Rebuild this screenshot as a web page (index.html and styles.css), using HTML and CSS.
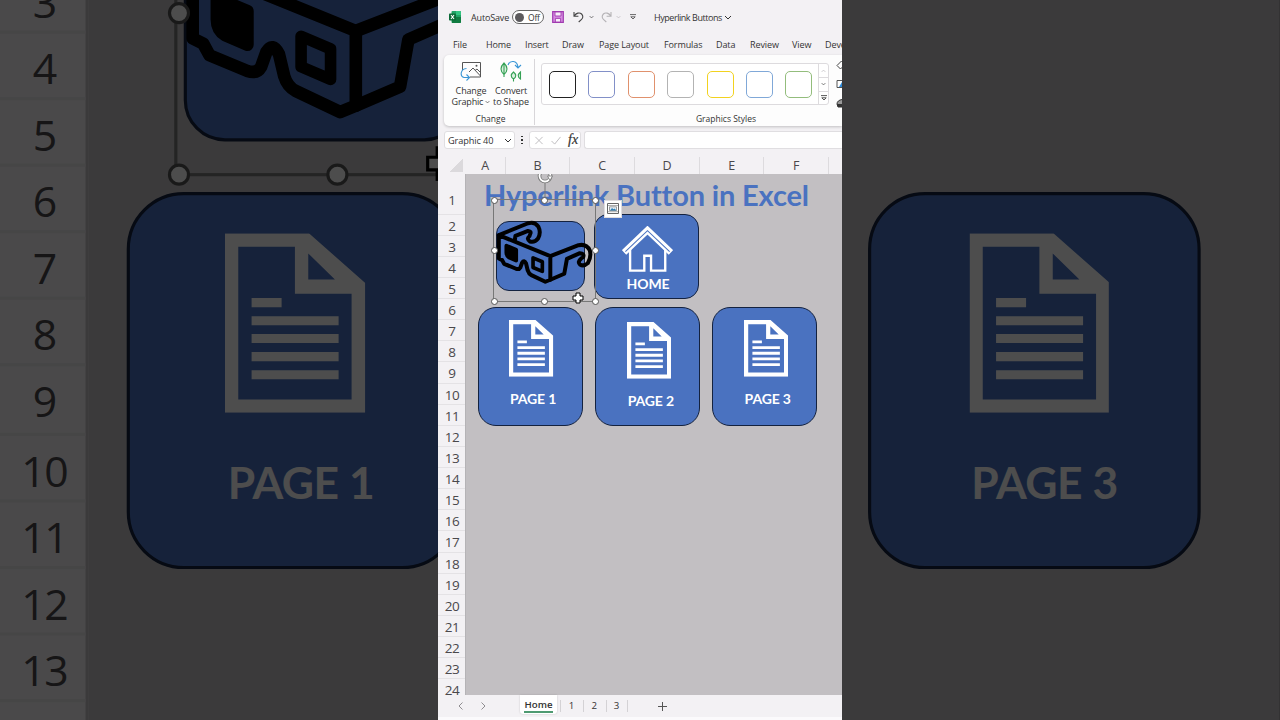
FILE: index.html
```html
<!DOCTYPE html>
<html lang="en">
<head>
    <meta charset="UTF-8">
    <meta name="viewport" content="width=device-width, initial-scale=1.0">
    <title>Hyperlink Buttons</title>
    <link rel="stylesheet" href="styles.css">
</head>
<body>
    <!-- shared icons -->
    <svg class="defs" width="0" height="0">
        <symbol id="doc" viewBox="0 0 421 535" preserveAspectRatio="none">
            <path fill="#fff" fill-rule="evenodd" d="M0 0H252L421 148V535H0ZM40 40V495H380V180H210V40ZM250 60V138H330Z"/>
            <path fill="#fff" d="M80 193h90v27H80zM80 247h261v27H80zM80 300h261v27H80zM80 354h261v27H80zM80 408h261v27H80z"/>
        </symbol>
        <symbol id="glasses" viewBox="0 0 306 307">
            <g fill="none" stroke="#000" stroke-width="12" stroke-linejoin="round" stroke-linecap="round">
                <path d="M14 106L169 169V240L154 246L112 226Q104 222 101 212L96 191Q90 179 84 189L79 203Q75 210 66 207L30 192L24 181L14 176Z"/>
                <path d="M14 106L102 70Q122 64 133 80Q142 98 132 116Q122 129 108 125Q96 117 106 109"/>
                <path d="M62 122L64 108L102 93Q114 94 108 104"/>
                <path d="M169 169L254 136Q278 131 288 152Q293 172 282 190Q270 201 258 194Q250 186 262 176"/>
                <path d="M169 240L211 222L219 177L258 160Q272 160 268 172"/>
                <path d="M117 174L145 186V215L117 203Z" stroke-width="11"/>
                <path d="M37 138L66 150V182L45 173Q37 168 37 158Z" fill="#000"/>
            </g>
        </symbol>
        <symbol id="chev" viewBox="0 0 8 5">
            <path d="M1 1L4 4L7 1" fill="none" stroke="currentColor"/>
        </symbol>
    </svg>

    <!-- dimmed enlarged copy of the sheet behind the window -->
    <div class="backdrop">
        <div class="backdrop-inner">
            <div class="sheet">
                <div class="rows rows-from-3">
                    <div>3</div><div>4</div><div>5</div><div>6</div><div>7</div><div>8</div>
                    <div>9</div><div>10</div><div>11</div><div>12</div><div>13</div>
                </div>
                <div class="canvas">
                    <div class="shape shape-glasses"></div>
                    <div class="shape shape-page page-1">
                        <svg class="doc"><use href="#doc"/></svg>
                        <span>PAGE 1</span>
                    </div>
                    <div class="shape shape-page page-3">
                        <svg class="doc"><use href="#doc"/></svg>
                        <span>PAGE 3</span>
                    </div>
                    <div class="selection">
                        <svg class="glasses"><use href="#glasses"/></svg>
                        <i class="handle w"></i><i class="handle sw"></i><i class="handle s"></i>
                    </div>
                    <svg class="cursor" viewBox="0 0 12 12"><path d="M4 1h4v3h3v4H8v3H4V8H1V4h3z"/></svg>
                </div>
            </div>
        </div>
    </div>

    <div class="app">
        <div class="titlebar">
            <svg class="logo" viewBox="0 0 12 12">
                <rect x="2.5" width="9.5" height="12" rx="1" fill="#21a366"/>
                <path d="M7 0h4a1 1 0 0 1 1 1v3H7z" fill="#33c481"/>
                <path d="M3 6h9v5a1 1 0 0 1-1 1H3z" fill="#107c41"/>
                <rect y="2.5" width="7" height="7" rx=".8" fill="#0b6a37"/>
                <path d="M2 4l3 4M5 4L2 8" stroke="#fff" stroke-width="1.1"/>
            </svg>
            <span>AutoSave</span>
            <div class="toggle"><i></i>Off</div>
            <svg class="save" viewBox="0 0 12 12">
                <path d="M.7.7h10.6v10.6H.7z" fill="#d58be0" stroke="#a03bb0" stroke-width="1.2"/>
                <path d="M3 1h6v4H3zM3.4 7.4h5.2V11H3.4z" fill="#f7eef8" stroke="#a03bb0" stroke-width=".9"/>
            </svg>
            <svg class="undo" viewBox="0 0 11 12">
                <path d="M1 1v4.2h4.4M1.3 5C3 2 6.500 1 8.600 3C10.500 5 10 7.200 8.300 8.700L5.700 11" fill="none" stroke="#444" stroke-width="1.100"/>
            </svg>
            <svg class="mini"><use href="#chev"/></svg>
            <svg class="undo redo" viewBox="0 0 11 12">
                <path d="M10 1v4.2H5.600M9.700 5C8 2 4.500 1 2.400 3C.5 5 1 7.200 2.700 8.700L5.300 11" fill="none" stroke="#b4b2b5" stroke-width="1.100"/>
            </svg>
            <svg class="mini pale"><use href="#chev"/></svg>
            <svg class="customize" viewBox="0 0 6 6"><path d="M0 .6h6M.8 2.800L3 5l2.200-2.200z" stroke="#444" stroke-width=".8" fill="none"/></svg>
            <span class="doc-name">Hyperlink Buttons</span>
            <svg class="chev"><use href="#chev"/></svg>
        </div>

        <div class="tabs">
            <span>File</span><span>Home</span><span>Insert</span><span>Draw</span><span>Page Layout</span>
            <span>Formulas</span><span>Data</span><span>Review</span><span>View</span><span>Developer</span>
        </div>

        <div class="ribbon">
            <div class="group group-change">
                <div class="commands">
                    <div class="command">
                        <svg viewBox="0 0 22 20">
                            <path d="M2.500 9V1.500h18V16H10M9 11l4-4 7.500 8M15 9.500l2-1.500 3.500 3.500" fill="none" stroke="#555" stroke-width="1"/>
                            <circle cx="16.500" cy="4.800" r="1" fill="#555"/>
                            <path d="M6.500 7.500C.5 8-.5 15 4 16.500h5M6.500 13.500l3 3-3 3" fill="none" stroke="#3a96d6" stroke-width="1.100"/>
                        </svg>
                        <span>Change<br>Graphic <svg class="mini"><use href="#chev"/></svg></span>
                    </div>
                    <div class="command">
                        <svg viewBox="0 0 22 22">
                            <path d="M8 5C10 0 17 0 18 7M15 5l3 3 3-3" fill="none" stroke="#3a96d6" stroke-width="1.100"/>
                            <g fill="#d9f0df" stroke="#35a155" stroke-width="1.100">
                                <path d="M4 3C0 7 0 11 4 14.500C8 11 8 7 4 3zM4 3v14"/>
                                <path d="M13.500 12c-3 2.500-3 5 0 7c3-2 3-4.500 0-7zM13.500 19v2.500"/>
                                <path d="M20.500 12c-3 2.500-3 5 0 7z"/>
                            </g>
                        </svg>
                        <span>Convert<br>to Shape</span>
                    </div>
                </div>
                <div class="group-name">Change</div>
            </div>
            <div class="group group-styles">
                <div class="gallery">
                    <div class="swatches">
                        <i class="black"></i><i class="indigo"></i><i class="orange"></i><i class="gray"></i>
                        <i class="yellow"></i><i class="blue"></i><i class="green"></i>
                    </div>
                    <div class="scroller">
                        <div><svg class="mini up pale"><use href="#chev"/></svg></div>
                        <div><svg class="mini"><use href="#chev"/></svg></div>
                        <div><svg class="customize" viewBox="0 0 6 6"><path d="M0 .6h6M.8 2.800L3 5l2.200-2.200z" stroke="#444" stroke-width=".9" fill="none"/></svg></div>
                    </div>
                </div>
                <div class="group-name">Graphics Styles</div>
            </div>
            <div class="side-icons">
                <svg viewBox="0 0 10 10"><path d="M1 5.500L5.500 1 9 4.500 4.500 9z" fill="#fff" stroke="#444"/></svg>
                <svg viewBox="0 0 10 10"><path d="M1 1.500h9v7H1z" fill="#fff" stroke="#555"/><path d="M3 8l3-5v5z" fill="#2b88d8"/></svg>
                <svg viewBox="0 0 10 10"><path d="M1 6C1 3.500 3 2 6 1.500h4V9H2z" fill="#999" stroke="#333"/><path d="M1 6h9v3H2z" fill="#333"/></svg>
            </div>
        </div>

        <div class="formula-bar">
            <div class="name-box">Graphic 40 <svg class="chev"><use href="#chev"/></svg></div>
            <div class="dots"><i></i><i></i><i></i></div>
            <div class="fx-box">
                <svg viewBox="0 0 10 10"><path d="M1 1l8 8M9 1L1 9" stroke="#b9b7ba" fill="none"/></svg>
                <svg viewBox="0 0 11 10"><path d="M.5 5.500l3.500 3.500L10.500 1" stroke="#b9b7ba" fill="none"/></svg>
                <em>fx</em>
            </div>
            <div class="formula"></div>
        </div>

        <div class="columns">
            <div class="corner"></div>
            <div>A</div><div>B</div><div>C</div><div>D</div><div>E</div><div>F</div>
        </div>

        <div class="sheet">
            <div class="rows">
                <div class="tall">1</div><div>2</div><div>3</div><div>4</div><div>5</div><div>6</div>
                <div>7</div><div>8</div><div>9</div><div>10</div><div>11</div><div>12</div>
                <div>13</div><div>14</div><div>15</div><div>16</div><div>17</div><div>18</div>
                <div>19</div><div>20</div><div>21</div><div>22</div><div>23</div><div>24</div>
            </div>
            <div class="canvas">
                <h1>Hyperlink Button in Excel</h1>
                <div class="shape shape-glasses"></div>
                <div class="shape shape-home">
                    <svg class="house" viewBox="0 0 151 136">
                        <path d="M24 68V132H66V88H86V132H128V68" fill="none" stroke="#fff" stroke-width="7"/>
                        <path d="M6 78L75.500 12L145 78" fill="none" stroke="#fff" stroke-width="19"/>
                        <path d="M10 76L75.500 13.500L141 76" fill="none" stroke="#4a72c0" stroke-width="3"/>
                    </svg>
                    <span>HOME</span>
                </div>
                <div class="shape shape-page page-1">
                    <svg class="doc"><use href="#doc"/></svg>
                    <span>PAGE 1</span>
                </div>
                <div class="shape shape-page page-2">
                    <svg class="doc"><use href="#doc"/></svg>
                    <span>PAGE 2</span>
                </div>
                <div class="shape shape-page page-3">
                    <svg class="doc"><use href="#doc"/></svg>
                    <span>PAGE 3</span>
                </div>
                <div class="selection">
                    <svg class="glasses"><use href="#glasses"/></svg>
                    <svg class="rotate" viewBox="0 0 16 30">
                        <path d="M8 11v19" stroke="#777"/>
                        <circle cx="8" cy="4" r="5.500" fill="none" stroke="#777" stroke-width="3.600"/>
                        <circle cx="8" cy="4" r="5.500" fill="none" stroke="#fff" stroke-width="1.800"/>
                        <path d="M10.500 4h5L13 8.500z" fill="#fff" stroke="#777" stroke-width=".8"/>
                    </svg>
                    <i class="handle nw"></i><i class="handle n"></i><i class="handle ne"></i>
                    <i class="handle w"></i><i class="handle e"></i>
                    <i class="handle sw"></i><i class="handle s"></i><i class="handle se"></i>
                </div>
                <div class="layout-options">
                    <svg viewBox="0 0 12 11">
                        <path d="M.5.5h11v10H.5z" fill="#fff" stroke="#666"/>
                        <path d="M1 2.500h10M1 8.700h10" stroke="#999" stroke-width=".8"/>
                        <path d="M2.500 3.800h7v3.700h-7z" fill="#e6f0f8" stroke="#777" stroke-width=".7"/>
                        <path d="M3 7.500l2-2.500 1.500 1.200 1-.7 2 2z" fill="#2e7fb5"/>
                    </svg>
                </div>
                <svg class="cursor" viewBox="0 0 12 12"><path d="M4 1h4v3h3v4H8v3H4V8H1V4h3z"/></svg>
            </div>
        </div>

        <div class="sheet-tabs">
            <svg class="nav" viewBox="0 0 5 8"><path d="M4.500.5L1 4l3.500 3.500" fill="none" stroke="#8f8d90"/></svg>
            <svg class="nav" viewBox="0 0 5 8"><path d="M.5.5L4 4 .5 7.500" fill="none" stroke="#8f8d90"/></svg>
            <div class="active"><span>Home</span></div>
            <div class="tab">1</div>
            <div class="tab">2</div>
            <div class="tab">3</div>
            <svg class="plus" viewBox="0 0 9 9"><path d="M4.500 0v9M0 4.500h9" stroke="#555"/></svg>
        </div>
    </div>
</body>
</html>
```
FILE: styles.css
```css
* {
    margin: 0;
    padding: 0;
    box-sizing: border-box;
}

body {
    width: 1280px;
    height: 720px;
    overflow: hidden;
    position: relative;
    display: flex;
    justify-content: center;
    background: #000;
    font-family: "Open Sans", "Noto Sans", sans-serif;
    color: #333;
}

svg {
    display: block;
    flex: none;
}

.defs {
    position: absolute;
}

.backdrop {
    position: absolute;
    left: 0;
    top: 0;
    width: 1280px;
    height: 720px;
    overflow: hidden;
    opacity: 0.3;
}

.backdrop-inner {
    width: 404px;
    height: 720px;
    padding-top: 174px;
    transform: scale(3.168);
    transform-origin: left center;
}

.app {
    position: relative;
    width: 404px;
    height: 720px;
    overflow: hidden;
    background: #f3f1f4;
    display: flex;
    flex-direction: column;
    font-size: 9px;
}

/* title bar */
.titlebar {
    height: 34px;
    flex: none;
    padding-left: 11px;
    display: grid;
    grid-template-columns: 22px 41px 40px 21px 16px 12px 15px 14px 24px 70px auto;
    align-items: center;
    white-space: nowrap;
}

.titlebar span {
    letter-spacing: -0.15px;
}

.titlebar .doc-name {
    letter-spacing: -0.45px;
}

.logo,
.save {
    width: 12px;
    height: 12px;
}

.toggle {
    width: 32px;
    height: 14px;
    border: 1px solid #666;
    border-radius: 7px;
    background: #fff;
    display: flex;
    align-items: center;
    gap: 4px;
    padding-left: 2px;
    font-size: 8.5px;
    letter-spacing: -0.2px;
}

.toggle i {
    width: 9px;
    height: 9px;
    border-radius: 50%;
    background: #5c5a5d;
}

.undo {
    width: 11px;
    height: 12px;
}

.chev {
    width: 8px;
    height: 5px;
}

.mini {
    width: 5px;
    height: 4px;
}

.pale {
    color: #b4b2b5;
}

.up {
    transform: rotate(180deg);
}

.customize {
    width: 6px;
    height: 6px;
}

.tabs {
    height: 21px;
    flex: none;
    padding-left: 15px;
    display: grid;
    grid-template-columns: 33px 39px 37px 37px 65px 52px 34px 42px 33px 60px;
    align-items: center;
    white-space: nowrap;
    letter-spacing: -0.1px;
}

/* ribbon */
.ribbon {
    height: 71px;
    flex: none;
    margin-left: 6px;
    background: #fdfdfd;
    border-radius: 5px 0 0 5px;
    box-shadow: 0 1px 3px rgba(0, 0, 0, 0.2);
    display: flex;
}

.group {
    display: flex;
    flex-direction: column;
    justify-content: space-between;
    margin: 4px 0 1px;
}

.group-change {
    width: 91px;
    flex: none;
    border-right: 1px solid #d8d6d9;
}

.commands {
    display: grid;
    grid-template-columns: 40px 40px;
    padding-left: 7px;
}

.command {
    display: flex;
    flex-direction: column;
    align-items: center;
    text-align: center;
    line-height: 11px;
    white-space: nowrap;
    letter-spacing: -0.15px;
}

.command > svg {
    width: 22px;
    height: 22px;
    margin: 1px 0 3px;
}

.command .mini {
    display: inline-block;
    vertical-align: 1px;
}

.group-name {
    text-align: center;
    line-height: 12px;
    font-size: 8.5px;
}

.group-change .group-name {
    padding-left: 3px;
}

.group-styles {
    width: 288px;
    flex: none;
    margin-left: 6px;
}

.group-styles .group-name {
    padding-left: 82px;
}

.gallery {
    height: 42px;
    margin-top: 4px;
    border: 1px solid #dddbde;
    border-radius: 3px;
    background: #fff;
    display: flex;
}

.swatches {
    flex: 1;
    display: flex;
    align-items: center;
    gap: 12.4px;
    padding-left: 7px;
}

.swatches i {
    width: 27px;
    height: 27px;
    border: 1px solid;
    border-radius: 5px;
    background: #fff;
}

.swatches .black { border-color: #222; }
.swatches .indigo { border-color: #8290c8; }
.swatches .orange { border-color: #e0916d; }
.swatches .gray { border-color: #b3b3b3; }
.swatches .yellow { border-color: #f2d21f; }
.swatches .blue { border-color: #80a8d8; }
.swatches .green { border-color: #93bd7c; }

.scroller {
    width: 10px;
    border-left: 1px solid #dddbde;
    display: grid;
    grid-template-rows: 1fr 1fr 1fr;
}

.scroller div {
    display: flex;
    align-items: center;
    justify-content: center;
}

.scroller div + div {
    border-top: 1px solid #dddbde;
}

.side-icons {
    display: flex;
    flex-direction: column;
    gap: 9px;
    padding: 5px 0 0 7px;
}

.side-icons svg {
    width: 10px;
    height: 10px;
}

/* formula bar */
.formula-bar {
    height: 18px;
    flex: none;
    margin: 5px 0 8px 6px;
    display: flex;
}

.name-box,
.fx-box,
.formula {
    border: 1px solid #e0dee1;
    border-radius: 3px;
    background: #fff;
    display: flex;
    align-items: center;
}

.name-box {
    width: 71px;
    justify-content: space-between;
    padding: 0 2px 0 3px;
    font-size: 9.2px;
    letter-spacing: -0.1px;
}

.dots {
    width: 14px;
    display: flex;
    flex-direction: column;
    align-items: center;
    justify-content: center;
    gap: 2px;
}

.dots i {
    width: 1.5px;
    height: 1.5px;
    background: #333;
}

.fx-box {
    width: 52px;
    padding-left: 4px;
    gap: 7px;
}

.fx-box svg {
    width: 10px;
    height: 9px;
}

.fx-box em {
    font: italic 14px/16px "Liberation Serif", serif;
    -webkit-text-stroke: 0.2px #333;
}

.formula {
    flex: 1;
    margin-left: 3px;
    border-right: none;
    border-radius: 3px 0 0 3px;
}

/* grid headings */
.columns {
    height: 17px;
    flex: none;
    display: grid;
    grid-template-columns: 27.5px 40px 64.7px 64.7px 64.7px 64.7px 64.7px;
    font-size: 12.5px;
    line-height: 18px;
    color: #4a484b;
    text-align: center;
}

.columns div {
    border-right: 1px solid #dddbde;
    padding-left: 0.5px;
}

.columns .corner {
    border: none;
    width: 14px;
    height: 13px;
    margin: 2px 0 0 11px;
    background: linear-gradient(135deg, transparent 50%, #dbd9dc 50%);
}

.sheet {
    height: 521px;
    flex: none;
    overflow: hidden;
    display: flex;
    background: #c2bfc2;
}

.rows {
    width: 27.5px;
    flex: none;
    background: #f3f1f4;
    border-right: 1px solid #b5b3b6;
    color: #4a484b;
    font-size: 13.5px;
    letter-spacing: -0.4px;
    text-align: center;
}

.rows div {
    height: 21.14px;
    line-height: 22px;
    padding-left: 1.5px;
    border-bottom: 1px solid #e4e2e5;
}

.rows .tall {
    height: 40.5px;
    padding-top: 15px;
}

.rows-from-3 {
    padding-top: 61.7px;
}

.backdrop .rows {
    border-right-color: #c2bfc2;
}

.backdrop .rows div {
    border-bottom-color: #e8e6e9;
}

.canvas {
    position: relative;
    flex: 1;
    margin-left: -0.5px;
}

.canvas h1 {
    position: absolute;
    left: 19px;
    top: 3px;
    font: bold 29px/36px "Lato", sans-serif;
    letter-spacing: -0.15px;
    color: #4a72c0;
    white-space: nowrap;
}

/* drawing objects on the sheet */
.shape {
    position: absolute;
    background: #4a72c0;
    border: 1.5px solid #14223f;
    color: #fff;
    font: bold 14px/18px "Lato", sans-serif;
    letter-spacing: -0.15px;
    text-align: center;
    white-space: nowrap;
    display: flex;
    flex-direction: column;
    align-items: center;
}

.shape-glasses {
    left: 31px;
    top: 47px;
    width: 89px;
    height: 70px;
    border-radius: 13px;
}

.shape-home {
    left: 129px;
    top: 40px;
    width: 105px;
    height: 85px;
    border-radius: 14px;
    padding-top: 10.5px;
    padding-left: 2px;
}

.shape-home span {
    padding-left: 1px;
}

.house {
    width: 51px;
    height: 46px;
    margin-bottom: 3px;
}

.shape-page {
    top: 133px;
    width: 105px;
    height: 119px;
    border-radius: 18px;
    padding-top: 12px;
    padding-left: 3px;
}

.shape-page span {
    padding-left: 3px;
}

.doc {
    width: 44.3px;
    height: 56.7px;
    margin-bottom: 13.4px;
}

.page-1 { left: 12.5px; }
.page-2 { left: 130.3px; padding-top: 14px; }
.page-3 { left: 247.2px; }

.selection {
    position: absolute;
    left: 28px;
    top: 25px;
    width: 103px;
    height: 103px;
    border: 1px solid #777;
}

.glasses {
    width: 102px;
    height: 102px;
}

.handle {
    position: absolute;
    width: 7px;
    height: 7px;
    margin: -3.5px 0 0 -3.5px;
    border: 1px solid #555;
    border-radius: 50%;
    background: #fff;
}

.nw { left: 0; top: 0; }
.n { left: 50%; top: 0; }
.ne { left: 100%; top: 0; }
.w { left: 0; top: 50%; }
.e { left: 100%; top: 50%; }
.sw { left: 0; top: 100%; }
.s { left: 50%; top: 100%; }
.se { left: 100%; top: 100%; }

.rotate {
    position: absolute;
    left: 43px;
    top: -28px;
    width: 16px;
    height: 30px;
}

.layout-options {
    position: absolute;
    left: 139px;
    top: 26px;
    width: 18px;
    height: 18px;
    padding: 2px;
    background: #fff;
    border: 1px solid #dedcdf;
}

.layout-options svg {
    width: 12px;
    height: 11px;
}

.cursor {
    position: absolute;
    left: 107px;
    top: 118px;
    width: 12px;
    height: 12px;
    fill: #fff;
    stroke: #000;
}

/* sheet tabs */
.sheet-tabs {
    height: 25px;
    flex: none;
    border-bottom: 3px solid #fbfafc;
    padding-left: 20px;
    display: flex;
    align-items: center;
    font-size: 9.7px;
}

.nav {
    width: 5px;
    height: 8px;
    margin-right: 18px;
}

.active {
    align-self: flex-start;
    width: 37px;
    height: 19px;
    margin: 0 3px 0 16px;
    background: #fff;
    border-radius: 0 0 3px 3px;
    box-shadow: 0 0 2px rgba(0, 0, 0, 0.2);
    display: flex;
    justify-content: center;
}

.active span {
    height: 18px;
    line-height: 19px;
    border-bottom: 2px solid #4f9a72;
    font-weight: 600;
    font-size: 9.7px;
}

.tab {
    width: 22.8px;
    height: 12px;
    line-height: 12px;
    border-left: 1px solid #d4d2d5;
    padding-right: 1px;
    text-align: center;
}

.tab:nth-of-type(4) {
    border-right: 1px solid #d4d2d5;
}

.plus {
    width: 9px;
    height: 9px;
    margin-left: 30px;
}
```
